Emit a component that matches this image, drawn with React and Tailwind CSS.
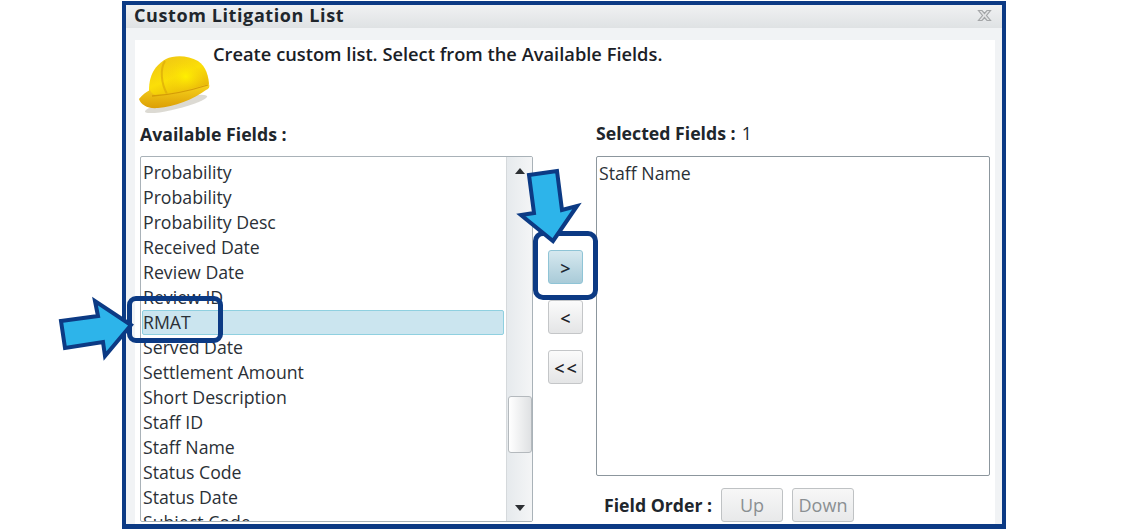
const FONT = "font-['Open_Sans','Noto_Sans',sans-serif]";
const fields = ["Probability","Probability","Probability Desc","Received Date","Review Date","Review ID","RMAT","Served Date","Settlement Amount","Short Description","Staff ID","Staff Name","Status Code","Status Date","Subject Code"];

function Hat() {
  return (
    <svg width="74" height="58" viewBox="0 0 74 58" className="shrink-0">
      <defs>
        <linearGradient id="d" x1="0.1" y1="0" x2="0.7" y2="1">
          <stop offset="0" stopColor="#eec216" />
          <stop offset="0.5" stopColor="#fbdf08" />
          <stop offset="1" stopColor="#e3ae08" />
        </linearGradient>
        <linearGradient id="b" x1="0" y1="0" x2="0" y2="1">
          <stop offset="0" stopColor="#f8d51c" />
          <stop offset="1" stopColor="#dc9f06" />
        </linearGradient>
        <radialGradient id="c" cx="0.55" cy="0.5" r="0.5">
          <stop offset="0" stopColor="#fff000" />
          <stop offset="1" stopColor="#f6d00c" stopOpacity="0" />
        </radialGradient>
      </defs>
      <ellipse cx="38" cy="49" rx="32" ry="5" fill="#9c9682" opacity="0.35" transform="rotate(-14 38 49)" />
      <path d="M11 36C11 24 14 12 28 4C36 0 50 0 60 6C68 11 71 22 71 31C60 38 30 44 14 44Z" fill="url(#d)" />
      <path d="M27 6C44 2 60 8 64 20C66 25 66 28 65 31C55 34 45 36 33 38C26 26 24 14 27 6Z" fill="url(#c)" />
      <path d="M27 6C22 14 23 28 29 39" fill="none" stroke="#dca90a" strokeWidth="2" opacity="0.7" />
      <path d="M1 44C4 40 8 37 12 35C14 39 16 40 19 40C36 38 54 34 71 29C72 32 71 34 68 35C56 44 36 52 20 53C10 54 3 50 1 44Z" fill="url(#b)" />
      <path d="M14 41C32 40 54 35 70 30" fill="none" stroke="#d49c06" strokeWidth="1.300" />
    </svg>
  );
}

function SmallButton({ children, active }) {
  return (
    <button className={`w-[35px] h-[34px] rounded-[3px] border flex items-center justify-center text-[18px] font-semibold leading-none tracking-[2px] pl-[2px] pt-[2px] ${active ? "border-[#8fc4d6] bg-gradient-to-b from-[#d6e8ef] to-[#a9cbd8] text-[#1d2a33]" : "border-[#c4c6c8] bg-gradient-to-b from-[#fbfbfb] to-[#e4e5e6] text-[#1c2228]"}`}>
      {children}
    </button>
  );
}

function DisabledButton({ children }) {
  return (
    <button className="w-[62px] h-[34px] rounded-[3px] border border-[#bfc2c4] bg-gradient-to-b from-[#f7f7f7] to-[#e8e9ea] text-[#8a8f92] text-[18px] leading-none">
      {children}
    </button>
  );
}

export default function App() {
  return (
    <div className={`relative w-[1123px] h-[529px] overflow-hidden bg-white ${FONT}`}>
      <div className="ml-[122px] mt-px w-[884px] h-[528px] border-x-4 border-t-4 border-b-[5px] border-x-[#0c3a84] border-t-[#0c3a84] border-b-[#0c3a84] bg-[#f1f3f5] flex flex-col">
        <div className="h-[23px] shrink-0 bg-gradient-to-b from-[#f0f1f2] to-[#dfe2e4] flex items-center justify-between pl-[8px] pr-[10px] pb-[3px]">
          <span className="text-[18px] font-bold text-[#20262c] leading-none tracking-[0.6px]">Custom Litigation List</span>
          <svg width="15" height="13" viewBox="0 0 15 13">
            <path d="M1.500 1.500H5L7.500 4.500L10 1.500H13.500L9.500 6.500L13.500 11.500H10L7.500 8.500L5 11.500H1.500L5.500 6.500Z" fill="#e3e4e5" stroke="#a4a6a8" strokeWidth="1.200" />
          </svg>
        </div>
        <div className="flex-1 min-h-0 mt-[12px] ml-[9px] mr-[7px] bg-white pl-[5px] flex flex-col">
          <div className="h-[76px] shrink-0 flex">
            <div className="mt-[15px] -ml-[2px] w-[74px]"><Hat /></div>
            <div className="ml-px mt-[3px] text-[18.300px] font-semibold text-[#1a2026] leading-[22px]">Create custom list. Select from the Available Fields.</div>
          </div>
          <div className="flex">
            <div className="w-[393px] shrink-0">
              <div className="h-[40px] flex items-center pb-[4px] text-[17.700px] font-bold text-[#20262c]">Available Fields :</div>
              <div className="h-[366px] flex border border-[#a9b2b8] rounded-[2px] overflow-hidden bg-white">
                <div className="flex-1 min-w-0 pt-[3px] overflow-hidden">
                  {fields.map((f, i) => (
                    <div key={i} className={`h-[25px] ml-px mr-[2px] flex items-center text-[17.700px] text-[#2a3036] leading-none ${f === "RMAT" ? "bg-[#cbe5ef] border border-[#8fd0e0] rounded-[2px]" : "pl-px pt-px"}`}>{f}</div>
                  ))}
                </div>
                <div className="w-[26px] shrink-0 border-l border-[#d5d9dc] bg-gradient-to-r from-[#e6eaed] to-[#f4f5f6] flex flex-col items-center">
                  <div className="mt-[11px] w-0 h-0 border-x-[5px] border-x-transparent border-b-[6px] border-b-[#2c2f33]" />
                  <div className="mt-[222px] w-[24px] h-[57px] rounded-[3px] border border-[#b4b9bd] bg-gradient-to-r from-[#ffffff] to-[#dfe1e3]" />
                  <div className="mt-[52px] w-0 h-0 border-x-[5px] border-x-transparent border-t-[6px] border-t-[#2c2f33]" />
                </div>
              </div>
            </div>
            <div className="w-[63px] shrink-0 pl-[15px] pt-[134px] flex flex-col gap-[16px]">
              <SmallButton active>&gt;</SmallButton>
              <SmallButton>&lt;</SmallButton>
              <SmallButton>&lt;&lt;</SmallButton>
            </div>
            <div className="w-[394px] shrink-0">
              <div className="h-[40px] flex items-center pb-[5px] text-[17.700px] text-[#20262c]"><span className="font-bold">Selected Fields :</span><span className="ml-[6px]">1</span></div>
              <div className="h-[320px] border border-[#8c969d] rounded-[2px] bg-white pt-[4px] pl-[2px]">
                <div className="h-[25px] flex items-center text-[17.700px] text-[#2a3036] leading-none">Staff Name</div>
              </div>
              <div className="mt-[12px] ml-[8px] flex items-center">
                <span className="w-[117px] text-[17.700px] font-bold text-[#20262c]">Field Order :</span>
                <DisabledButton>Up</DisabledButton>
                <span className="w-[9px]" />
                <DisabledButton>Down</DisabledButton>
              </div>
            </div>
          </div>
        </div>
      </div>

      {/* callouts lying over the dialog */}
      <div className="absolute left-[127px] top-[296px] w-[96px] h-[47px] rounded-[9px] border-[5px] border-[#0c3a84]" />
      <div className="absolute left-[533px] top-[231px] w-[65px] h-[69px] rounded-[10px] border-[5px] border-[#0c3a84]" />
      <svg className="absolute left-[55px] top-[295px]" width="82" height="68" viewBox="55 295 82 68">
        <path d="M61 321L98 316L95 301L131 325L105 356L103 342L65 348Z" fill="#2db4ea" stroke="#0c3a84" strokeWidth="4" strokeLinejoin="miter" />
      </svg>
      <svg className="absolute left-[514px] top-[165px]" width="70" height="82" viewBox="514 165 70 82">
        <path d="M529 175L557 171L562 210L577 206L553 241L521 215L534 213Z" fill="#2db4ea" stroke="#0c3a84" strokeWidth="4" strokeLinejoin="miter" />
      </svg>
    </div>
  );
}
